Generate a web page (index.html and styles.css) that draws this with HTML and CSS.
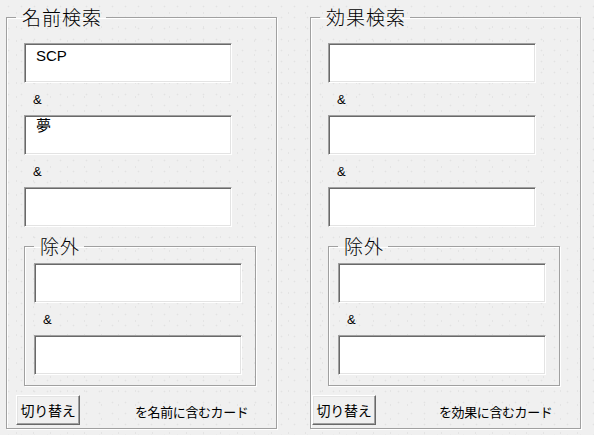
FILE: index.html
```html
<!DOCTYPE html>
<html lang="ja">
<head>
<meta charset="utf-8">
<title>検索</title>
<link rel="stylesheet" href="styles.css">
</head>
<body>
<div class="app">
  <fieldset class="group">
    <legend class="group-title">名前検索</legend>
    <div class="stack">
      <div class="textbox">SCP</div>
      <div class="amp">&amp;</div>
      <div class="textbox textbox--cjk">夢</div>
      <div class="amp">&amp;</div>
      <div class="textbox"></div>
      <fieldset class="group group--sub">
        <legend class="group-title">除外</legend>
        <div class="sub-stack">
          <div class="textbox"></div>
          <div class="amp">&amp;</div>
          <div class="textbox"></div>
        </div>
      </fieldset>
    </div>
    <div class="footer">
      <button class="btn btn--left">切り替え</button>
      <span class="note">を名前に含むカード</span>
    </div>
  </fieldset>

  <fieldset class="group">
    <legend class="group-title">効果検索</legend>
    <div class="stack">
      <div class="textbox"></div>
      <div class="amp">&amp;</div>
      <div class="textbox"></div>
      <div class="amp">&amp;</div>
      <div class="textbox"></div>
      <fieldset class="group group--sub">
        <legend class="group-title">除外</legend>
        <div class="sub-stack">
          <div class="textbox"></div>
          <div class="amp">&amp;</div>
          <div class="textbox"></div>
        </div>
      </fieldset>
    </div>
    <div class="footer">
      <button class="btn btn--right">切り替え</button>
      <span class="note">を効果に含むカード</span>
    </div>
  </fieldset>
</div>
</body>
</html>
```

FILE: styles.css
```css
html, body {
  margin: 0;
  padding: 0;
}

body {
  width: 594px;
  height: 435px;
  overflow: hidden;
  background-color: #f0f0f0;
  background-image:
    radial-gradient(circle, #e2e2e2 0.7px, transparent 1.1px),
    radial-gradient(circle, #e4e4e4 0.7px, transparent 1.1px);
  background-size: 13px 11px, 17px 14px;
  background-position: 2px 1px, 8px 6px;
  font-family: "Noto Sans CJK JP", "Liberation Sans", sans-serif;
  color: #000;
}

.app {
  display: flex;
  align-items: flex-start;
  gap: 33px;
  padding: 6px 0 0 6px;
}

.group {
  margin: 0;
  padding: 0;
  min-width: 0;
  width: 271px;
  box-sizing: border-box;
  border: 1px solid #a0a0a0;
  box-shadow: 1px 1px 0 #ffffff, inset 1px 1px 0 #ffffff;
}

.group--sub {
  width: 232px;
  margin-top: 8px;
}

.group-title {
  margin-left: 9px;
  padding: 0 4px 0 6px;
  font-size: 19px;
  font-weight: 300;
  line-height: 22px;
  letter-spacing: 1px;
}

.stack {
  display: flex;
  flex-direction: column;
  align-items: flex-start;
  padding: 15px 0 0 17px;
}

.sub-stack {
  display: flex;
  flex-direction: column;
  align-items: flex-start;
  padding: 6px 0 10px 9px;
}

.textbox {
  width: 208px;
  height: 40px;
  box-sizing: border-box;
  background: #ffffff;
  border-top: 1px solid #a0a0a0;
  border-left: 1px solid #a0a0a0;
  border-right: 1px solid #ffffff;
  border-bottom: 1px solid #ffffff;
  box-shadow: inset 1px 1px 0 #696969, inset -1px -1px 0 #e3e3e3;
  padding: 3px 0 0 11px;
  font-family: "Liberation Sans", "Noto Sans CJK JP", sans-serif;
  font-size: 15px;
  line-height: 17px;
}

.textbox--cjk {
  padding-top: 1px;
}

.amp {
  height: 32px;
  box-sizing: border-box;
  padding: 9px 0 0 9px;
  font-family: "Liberation Sans", sans-serif;
  font-size: 13px;
  line-height: 15px;
}

.footer {
  display: grid;
  grid-template-columns: 128px 1fr;
  align-items: center;
  margin-top: 9px;
  padding-bottom: 3px;
}

.btn {
  width: 64px;
  height: 30px;
  padding: 0;
  box-sizing: border-box;
  background: #f0f0f0;
  border-top: 1px solid #ffffff;
  border-left: 1px solid #ffffff;
  border-right: 1px solid #696969;
  border-bottom: 1px solid #696969;
  box-shadow: inset -1px -1px 0 #a0a0a0, inset 1px 1px 0 #e3e3e3;
  font-family: "Noto Sans CJK JP", sans-serif;
  font-size: 14px;
  line-height: 16px;
  letter-spacing: -0.3px;
  color: #000;
}

.btn--left {
  margin-left: 9px;
}

.btn--right {
  margin-left: 1px;
}

.note {
  padding-top: 3px;
  font-size: 13px;
  line-height: 15px;
  letter-spacing: -0.4px;
  white-space: nowrap;
}
```
